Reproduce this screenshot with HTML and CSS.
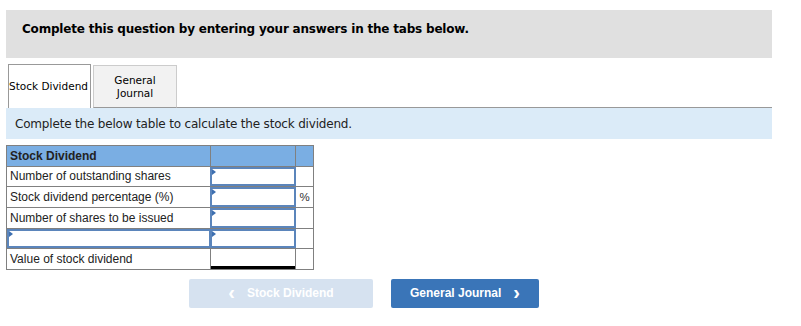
FILE: index.html
```html
<!DOCTYPE html>
<html lang="en">
<head>
  <meta charset="UTF-8">
  <title>Stock Dividend</title>
  <link rel="stylesheet" href="styles.css">
</head>
<body>
  <div class="page">
    <!-- Question banner -->
    <div class="banner">Complete this question by entering your answers in the tabs below.</div>

    <!-- Tabs -->
    <div class="tabs">
      <div class="tab active">Stock Dividend</div>
      <div class="tab">General<br>Journal</div>
      <div class="tab-rule"></div>
    </div>

    <div class="instructions">Complete the below table to calculate the stock dividend.</div>

    <!-- Worksheet table -->
    <table class="sheet">
      <tr class="head">
        <th class="label">Stock Dividend</th>
        <th class="amount"></th>
        <th class="unit"></th>
      </tr>
      <tr>
        <td class="label">Number of outstanding shares</td>
        <td class="amount"><div class="field"></div></td>
        <td class="unit"></td>
      </tr>
      <tr>
        <td class="label">Stock dividend percentage (%)</td>
        <td class="amount"><div class="field"></div></td>
        <td class="unit">%</td>
      </tr>
      <tr>
        <td class="label">Number of shares to be issued</td>
        <td class="amount"><div class="field"></div></td>
        <td class="unit"></td>
      </tr>
      <tr>
        <td class="label"><div class="field"></div></td>
        <td class="amount"><div class="field"></div></td>
        <td class="unit"></td>
      </tr>
      <tr>
        <td class="label">Value of stock dividend</td>
        <td class="amount"><div class="total"></div></td>
        <td class="unit"></td>
      </tr>
    </table>

    <!-- Navigation -->
    <div class="nav">
      <button class="btn prev" disabled><span class="chev">&lsaquo;</span> Stock Dividend</button>
      <button class="btn next">General Journal <span class="chev">&rsaquo;</span></button>
    </div>
  </div>
</body>
</html>
```

FILE: styles.css
```css
body {
  margin: 0;
  background: #fff;
  color: #000;
  font-family: "DejaVu Sans", Verdana, sans-serif;
}

.page {
  padding: 10px 29px 0 6px;
}

/* Question banner */
.banner {
  background: #e0e0e0;
  height: 48px;
  box-sizing: border-box;
  padding: 12px 0 0 16px;
  font-size: 12px;
  letter-spacing: -0.2px;
  font-weight: bold;
}

/* Tabs */
.tabs {
  display: flex;
  align-items: flex-end;
  margin-top: 6px;
  height: 44px;
}

.tab {
  width: 84px;
  height: 43px;
  box-sizing: border-box;
  display: flex;
  align-items: center;
  justify-content: center;
  text-align: center;
  font-size: 10.5px;
  line-height: 13px;
  background: #f2f2f2;
  border: 1px solid #cccccc;
  border-bottom: 1px solid #999;
  margin-left: 2px;
}

.tab.active {
  width: 83px;
  height: 44px;
  margin-left: 2px;
  background: #fff;
  border: 1px solid #999;
  border-bottom: none;
  justify-content: flex-start;
  padding-left: 0;
}

.tab-rule {
  flex: 1;
  border-bottom: 1px solid #999;
}

.instructions {
  background: #dbebf8;
  height: 31px;
  box-sizing: border-box;
  padding: 9px 0 0 9px;
  font-size: 12px;
  letter-spacing: -0.18px;
  color: #222;
}

/* Worksheet table */
.sheet {
  margin-top: 6px;
  border-collapse: collapse;
  font-family: "Liberation Sans", Arial, sans-serif;
  font-size: 12px;
}

.sheet th,
.sheet td {
  border: 1px solid #808080;
  height: 19.67px;
  padding: 0;
  text-align: left;
}

.sheet .head th {
  background: #7aaee3;
  font-weight: bold;
}

.sheet .label {
  width: 200px;
  padding-left: 3px;
  color: #222;
}

.sheet .amount {
  width: 84px;
}

.sheet .unit {
  width: 17px;
  text-align: center;
  font-size: 11.5px;
  color: #333;
}

.field {
  position: relative;
  height: 19.67px;
  box-sizing: border-box;
  border: 2px solid #5b85bb;
  margin: 0 -1px;
}

.sheet .label .field {
  margin-left: -3px;
}

.field::before {
  content: "";
  position: absolute;
  top: 0;
  left: 0;
  border-top: 3px solid transparent;
  border-bottom: 3px solid transparent;
  border-left: 4px solid #3d6fb0;
}

.total {
  height: 19.67px;
  box-sizing: border-box;
  border-bottom: 3px solid #000;
}

/* Navigation */
.nav {
  display: flex;
  gap: 18px;
  margin-top: 9px;
  padding-left: 183px;
}

.btn {
  height: 29px;
  border: none;
  border-radius: 2px;
  color: #fff;
  font-family: "Liberation Sans", Arial, sans-serif;
  font-size: 12px;
  font-weight: bold;
  display: flex;
  align-items: center;
  justify-content: center;
  gap: 12px;
}

.btn .chev {
  font-size: 20px;
  line-height: 1;
  margin-top: -3px;
}

.prev {
  width: 184px;
  background: #d6e2f0;
}

.next {
  width: 148px;
  background: #3a75b8;
}
```
